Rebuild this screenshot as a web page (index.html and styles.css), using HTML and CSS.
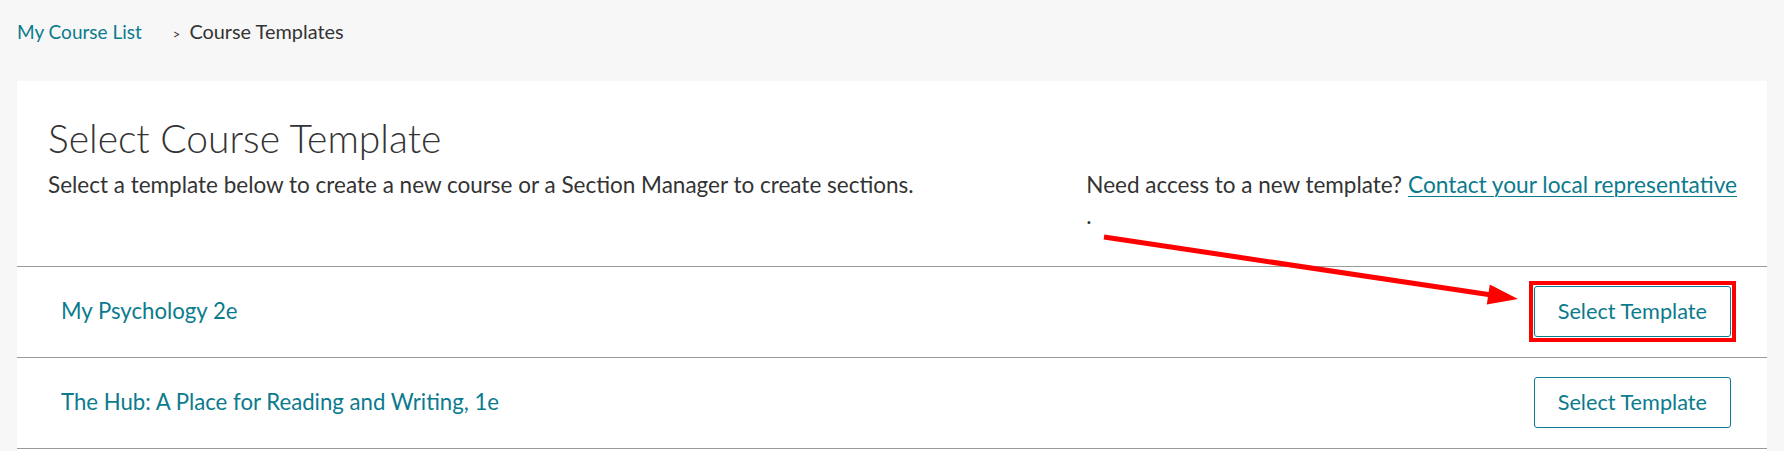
FILE: index.html
```html
<!DOCTYPE html>
<html lang="en">
<head>
<meta charset="utf-8">
<title>Course Templates</title>
<link rel="stylesheet" href="styles.css">
</head>
<body>
<nav class="crumbs">
  <a class="crumb-link" href="#">My Course List</a>
  <span class="crumb-sep">&gt;</span>
  <span class="crumb-current">Course Templates</span>
</nav>
<main class="panel">
  <header class="panel-head">
    <h1 class="title">Select Course Template</h1>
    <p class="subtitle">Select a template below to create a new course or a Section Manager to create sections.</p>
    <p class="access">Need access to a new template? <a class="access-link" href="#">Contact your local representative</a><br>.</p>
  </header>
  <ul class="templates">
    <li class="template-row">
      <a class="template-name" href="#">My Psychology 2e</a>
      <button class="select-btn highlighted" type="button">Select Template</button>
    </li>
    <li class="template-row">
      <a class="template-name" href="#">The Hub: A Place for Reading and Writing, 1e</a>
      <button class="select-btn" type="button">Select Template</button>
    </li>
  </ul>
</main>
<svg class="annotation" width="1784" height="451" viewBox="0 0 1784 451" aria-hidden="true">
  <line x1="1104" y1="237" x2="1490" y2="294.8" stroke="#ff0000" stroke-width="5" stroke-linecap="butt"/>
  <polygon points="1518,299 1489.8,284.6 1486.8,304.4" fill="#ff0000"/>
</svg>
</body>
</html>
```
FILE: styles.css
```css
* {
  box-sizing: border-box;
}

html,
body {
  margin: 0;
  padding: 0;
}

body {
  position: relative;
  width: 1784px;
  height: 451px;
  overflow: hidden;
  background: #f7f7f7;
  font-family: "Lato", "Source Sans Pro", "Noto Sans", sans-serif;
  color: #333333;
}

a {
  color: #0b7b8d;
  text-decoration: none;
}

/* breadcrumb */
.crumbs {
  display: flex;
  align-items: baseline;
  height: 81px;
  padding: 20px 17px 0;
  font-size: 19px;
  line-height: 1.2;
}

.crumb-sep {
  margin: 0 9px 0 31px;
  font-size: 13px;
  color: #333333;
}

.crumb-current {
  font-size: 19.9px;
  color: #333333;
}

/* panel */
.panel {
  margin: 0 17px;
  background: #ffffff;
  min-height: 370px;
}

.panel-head {
  display: grid;
  grid-template-columns: 1fr auto;
  align-items: start;
  padding: 34px 30px 34px 31px;
}

.title {
  grid-column: 1 / 3;
  margin: 0;
  font-size: 39px;
  font-weight: 300;
  line-height: 1.2;
  color: #333333;
}

.subtitle,
.access {
  margin: 7px 0 0;
  font-size: 22.5px;
  line-height: 31.5px;
  color: #333333;
}

.access {
  white-space: nowrap;
}

.access-link {
  font-size: 22.7px;
  text-decoration: underline;
  text-decoration-thickness: 1px;
  text-underline-offset: 3px;
}

/* template rows */
.templates {
  list-style: none;
  margin: 0;
  padding: 0;
}

.template-row {
  display: flex;
  align-items: center;
  justify-content: space-between;
  height: 91px;
  padding: 0 36px 0 44px;
  border-top: 1px solid #9a9a9a;
}

.template-row:last-child {
  height: 92px;
  border-bottom: 1px solid #9a9a9a;
}

.template-name {
  font-size: 22.2px;
  line-height: 1.2;
}

.select-btn {
  position: relative;
  height: 51px;
  padding: 0 23px;
  border: 1px solid #0b7b8d;
  border-radius: 3px;
  background: #ffffff;
  color: #0b7b8d;
  font-family: inherit;
  font-size: 21.7px;
  line-height: 1;
  cursor: pointer;
}

/* red square highlight frame drawn over the first button */
.select-btn.highlighted::after {
  content: "";
  position: absolute;
  top: -6px;
  right: -6px;
  bottom: -6px;
  left: -6px;
  border: 4px solid #ff0000;
  pointer-events: none;
}

/* red arrow annotation drawn over the page */
.annotation {
  position: absolute;
  top: 0;
  left: 0;
  pointer-events: none;
}
```
